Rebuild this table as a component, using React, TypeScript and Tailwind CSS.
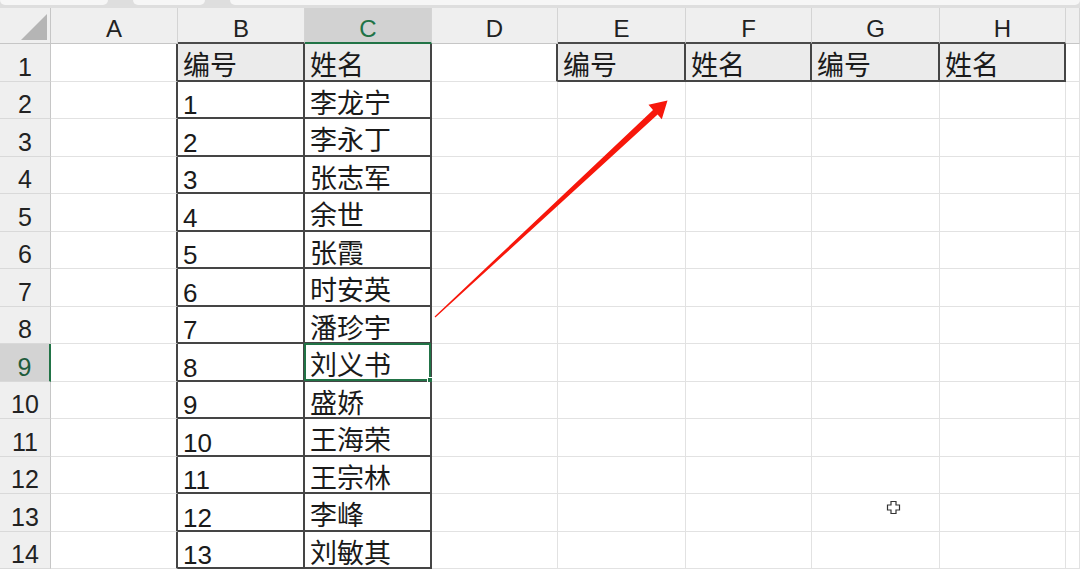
import type { ReactNode } from 'react'

// 列宽（行号列 + A..H + 右侧残列）
const COLS = ['A', 'B', 'C', 'D', 'E', 'F', 'G', 'H', '']
const NAMES = [
  '李龙宁', '李永丁', '张志军', '余世', '张霞', '时安英', '潘珍宇',
  '刘义书', '盛娇', '王海荣', '王宗林', '李峰', '刘敏其',
]
const SEL_ROW = 9
const SEL_COL = 2

// 有边框的单元格：B1:C14 与 E1:H1
const isBox = (r: number, c: number) =>
  (r >= 1 && r <= 14 && (c === 1 || c === 2)) || (r === 1 && c >= 4 && c <= 7)

const cellValue = (r: number, c: number): string => {
  if (r === 1) {
    if (c === 1 || c === 4 || c === 6) return '编号'
    if (c === 2 || c === 5 || c === 7) return '姓名'
    return ''
  }
  if (c === 1) return String(r - 1)
  if (c === 2) return NAMES[r - 2] ?? ''
  return ''
}

function Cell({ r, c }: { r: number; c: number }) {
  const right = isBox(r, c) || isBox(r, c + 1)
  const bottom = isBox(r, c) || isBox(r + 1, c)
  const fill = r === 1 && isBox(r, c)
  const value = cellValue(r, c)
  const numeric = /^\d+$/.test(value)
  return (
    <div
      className={[
        'relative flex items-center pl-[5px] text-[#1a1a1a]',
        right ? 'border-r-2 border-r-[#454545]' : 'border-r border-r-[#e2e2e2]',
        bottom ? 'border-b-2 border-b-[#454545]' : 'border-b border-b-[#e2e2e2]',
        fill ? 'bg-[#ebebeb]' : 'bg-white',
        numeric ? 'pt-[12px] text-[26px] leading-none' : 'pt-[10px] text-[27px] leading-none',
      ].join(' ')}
    >
      {value}
      {r === SEL_ROW && c === SEL_COL && (
        <div className="absolute -left-[1px] -top-[1px] -right-[1px] -bottom-[1px] border-2 border-[#217346]">
          <div className="absolute -right-[4px] -bottom-[4px] h-[6px] w-[6px] border border-white bg-[#217346]" />
        </div>
      )}
    </div>
  )
}

function RowHead({ r }: { r: number }) {
  const sel = r === SEL_ROW
  return (
    <div
      className={[
        'flex items-center justify-center pt-[10px] text-[25px] leading-none border-b border-b-[#d9d9d9]',
        sel
          ? 'bg-[#d3d3d3] text-[#1f5c3b] border-r-2 border-r-[#217346]'
          : 'bg-[#efefef] text-[#222] border-r border-r-[#c6c6c6]',
      ].join(' ')}
    >
      {r}
    </div>
  )
}

function ColHead({ c }: { c: number }) {
  const sel = c === SEL_COL
  return (
    <div
      className={[
        'flex items-center justify-center pt-[7px] text-[24px] leading-none border-r border-r-[#d4d4d4]',
        sel
          ? 'bg-[#d2d2d2] text-[#217346] border-b-2 border-b-[#217346]'
          : isBox(1, c)
            ? 'bg-[#efefef] text-[#222] border-b-2 border-b-[#4a4a4a]'
            : 'bg-[#efefef] text-[#222] border-b border-b-[#c6c6c6]',
      ].join(' ')}
    >
      {COLS[c]}
    </div>
  )
}

export default function App() {
  const rows: ReactNode[] = []
  for (let r = 1; r <= 14; r++) {
    rows.push(<RowHead key={`h${r}`} r={r} />)
    COLS.forEach((_, c) => rows.push(<Cell key={`${r}-${c}`} r={r} c={c} />))
  }

  return (
    <div className="relative h-[570px] w-[1080px] overflow-hidden bg-white font-['Liberation_Sans','Noto_Sans_CJK_SC',sans-serif]">
      {/* 顶部工具栏残边 */}
      <div className="flex h-[8px] gap-[25px] bg-[#dedede]">
        <div className="h-[5px] w-[108px] rounded-b-md bg-[#f6f6f6]" />
        <div className="h-[5px] w-[72px] rounded-b-md bg-[#f6f6f6]" />
        <div className="h-[5px] flex-1 rounded-b-md bg-[#f6f6f6]" />
      </div>

      {/* 表格 */}
      <div className="grid grid-cols-[51px_127px_127px_127px_126px_128px_126px_128px_126px_1fr] grid-rows-[36px_repeat(14,37.5px)]">
        {/* 左上角 */}
        <div className="relative border-r border-b border-[#c6c6c6] bg-[#efefef]">
          <svg className="absolute left-0 top-0" width="51" height="36" viewBox="0 0 51 36">
            <polygon points="21,32 47,32 47,6" fill="#b5b5b5" />
          </svg>
        </div>
        {COLS.map((_, c) => (
          <ColHead key={`c${c}`} c={c} />
        ))}
        {rows}
      </div>

      {/* 红色箭头 */}
      <svg className="pointer-events-none absolute left-0 top-0" width="1080" height="570">
        <polygon
          points="434.6,316.4 653,110 648.5,104.8 667.5,100.5 661.8,119.2 657.6,114.4 435.4,317.6"
          fill="#f7170b"
        />
      </svg>

      {/* 鼠标十字光标 */}
      <svg className="pointer-events-none absolute left-[886px] top-[500px]" width="15" height="15" viewBox="0 0 15 15">
        <path
          d="M5 1.5h5v3.5h3.5v5H10v3.5H5V10H1.5V5H5z"
          fill="#fff"
          stroke="#333"
          strokeWidth="1.2"
        />
      </svg>
    </div>
  )
}
